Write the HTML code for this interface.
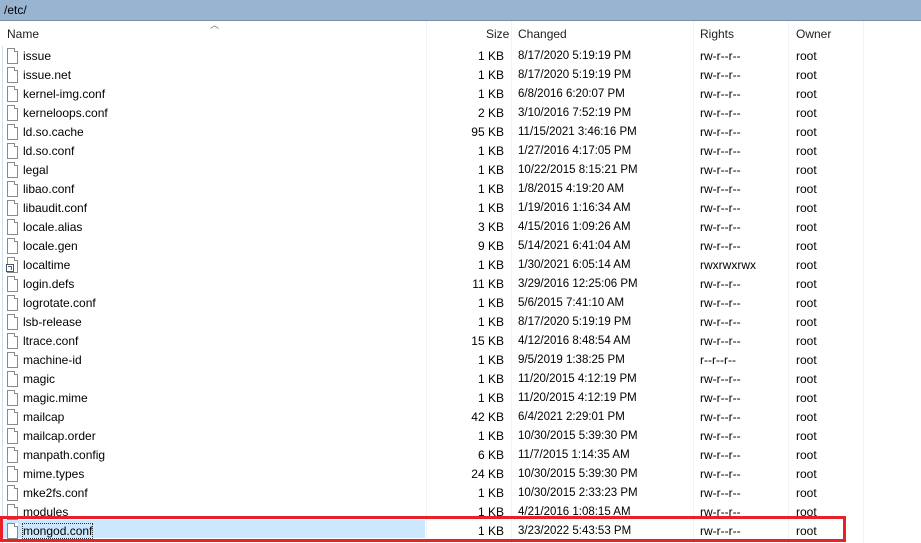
<!DOCTYPE html>
<html><head><style>
body{margin:0;width:921px;height:543px;overflow:hidden;background:#fff;font-family:"Liberation Sans",sans-serif;font-size:12px;color:#000;position:relative}
.t{position:absolute;left:0;top:0;width:921px;height:20px;background:#99b4d1;border-bottom:1px solid #7a8fa8}
.t span{position:absolute;left:4px;top:3px;font-size:12px}
.h{position:absolute;top:27px;font-size:12px;color:#1e1e1e}
.v{position:absolute;top:21px;width:1px;height:522px;background:#f1f3f6}
.r{position:absolute;left:0;width:921px;height:19px}
.r div{position:absolute;top:3px;white-space:nowrap}
.n{left:23px}.s{right:417px}.r .c{left:518px;font-size:11.5px;top:4px}.g{left:700px}.o{left:796px}
.ic{position:absolute;left:7px;top:2px;width:9px;height:14px;border:1px solid #8a8a8a;background:#fff}
.ic:after{content:"";position:absolute;right:-1px;top:-1px;width:3px;height:3px;background:#fff;border-left:1px solid #8a8a8a;border-bottom:1px solid #8a8a8a}
.lk{position:absolute;left:6px;top:9px;width:6px;height:6px;background:#fff;border:1px solid #555}
.lk:after{content:"";position:absolute;left:1px;top:1px;width:3px;height:3px;border-top:1.5px solid #2a6ab8;border-right:1.5px solid #2a6ab8}
.sel{position:absolute;left:3px;top:520px;width:422px;height:18px;background:#cce8ff}
.red{position:absolute;left:0;top:516px;width:840px;height:20px;border:3.5px solid #e8202a}
</style></head><body>
<div class="t"><span>/etc/</span></div>
<div style="position:absolute;left:2px;top:46px;width:1px;height:497px;background:#cfe0f3"></div>
<div class="v" style="left:426px"></div><div class="v" style="left:511px"></div><div class="v" style="left:693px"></div><div class="v" style="left:788px"></div><div class="v" style="left:863px"></div>
<div style="position:absolute;left:210px;top:18px;font-size:9px;color:#666">︿</div>
<div class="h" style="left:7px">Name</div><div class="h" style="left:486px">Size</div><div class="h" style="left:518px">Changed</div><div class="h" style="left:700px">Rights</div><div class="h" style="left:796px">Owner</div>
<div class="sel"></div>
<div id="rows"></div>
<script>
var d=[["issue","1 KB","8/17/2020 5:19:19 PM","rw-r--r--"],["issue.net","1 KB","8/17/2020 5:19:19 PM","rw-r--r--"],["kernel-img.conf","1 KB","6/8/2016 6:20:07 PM","rw-r--r--"],["kerneloops.conf","2 KB","3/10/2016 7:52:19 PM","rw-r--r--"],["ld.so.cache","95 KB","11/15/2021 3:46:16 PM","rw-r--r--"],["ld.so.conf","1 KB","1/27/2016 4:17:05 PM","rw-r--r--"],["legal","1 KB","10/22/2015 8:15:21 PM","rw-r--r--"],["libao.conf","1 KB","1/8/2015 4:19:20 AM","rw-r--r--"],["libaudit.conf","1 KB","1/19/2016 1:16:34 AM","rw-r--r--"],["locale.alias","3 KB","4/15/2016 1:09:26 AM","rw-r--r--"],["locale.gen","9 KB","5/14/2021 6:41:04 AM","rw-r--r--"],["localtime","1 KB","1/30/2021 6:05:14 AM","rwxrwxrwx"],["login.defs","11 KB","3/29/2016 12:25:06 PM","rw-r--r--"],["logrotate.conf","1 KB","5/6/2015 7:41:10 AM","rw-r--r--"],["lsb-release","1 KB","8/17/2020 5:19:19 PM","rw-r--r--"],["ltrace.conf","15 KB","4/12/2016 8:48:54 AM","rw-r--r--"],["machine-id","1 KB","9/5/2019 1:38:25 PM","r--r--r--"],["magic","1 KB","11/20/2015 4:12:19 PM","rw-r--r--"],["magic.mime","1 KB","11/20/2015 4:12:19 PM","rw-r--r--"],["mailcap","42 KB","6/4/2021 2:29:01 PM","rw-r--r--"],["mailcap.order","1 KB","10/30/2015 5:39:30 PM","rw-r--r--"],["manpath.config","6 KB","11/7/2015 1:14:35 AM","rw-r--r--"],["mime.types","24 KB","10/30/2015 5:39:30 PM","rw-r--r--"],["mke2fs.conf","1 KB","10/30/2015 2:33:23 PM","rw-r--r--"],["modules","1 KB","4/21/2016 1:08:15 AM","rw-r--r--"],["mongod.conf","1 KB","3/23/2022 5:43:53 PM","rw-r--r--"]];
var h="";d.forEach(function(r,i){h+='<div class="r" style="top:'+(46+19*i)+'px"><span class="ic"></span>'+(r[0]=="localtime"?'<span class="lk"></span>':'')+'<div class="n"'+(i==25?' style="outline:1px dotted #333"':'')+'>'+r[0]+'</div><div class="s">'+r[1]+'</div><div class="c">'+r[2]+'</div><div class="g">'+r[3]+'</div><div class="o">root</div></div>'});
document.getElementById("rows").innerHTML=h;
</script>
<div class="red"></div>
</body></html>
